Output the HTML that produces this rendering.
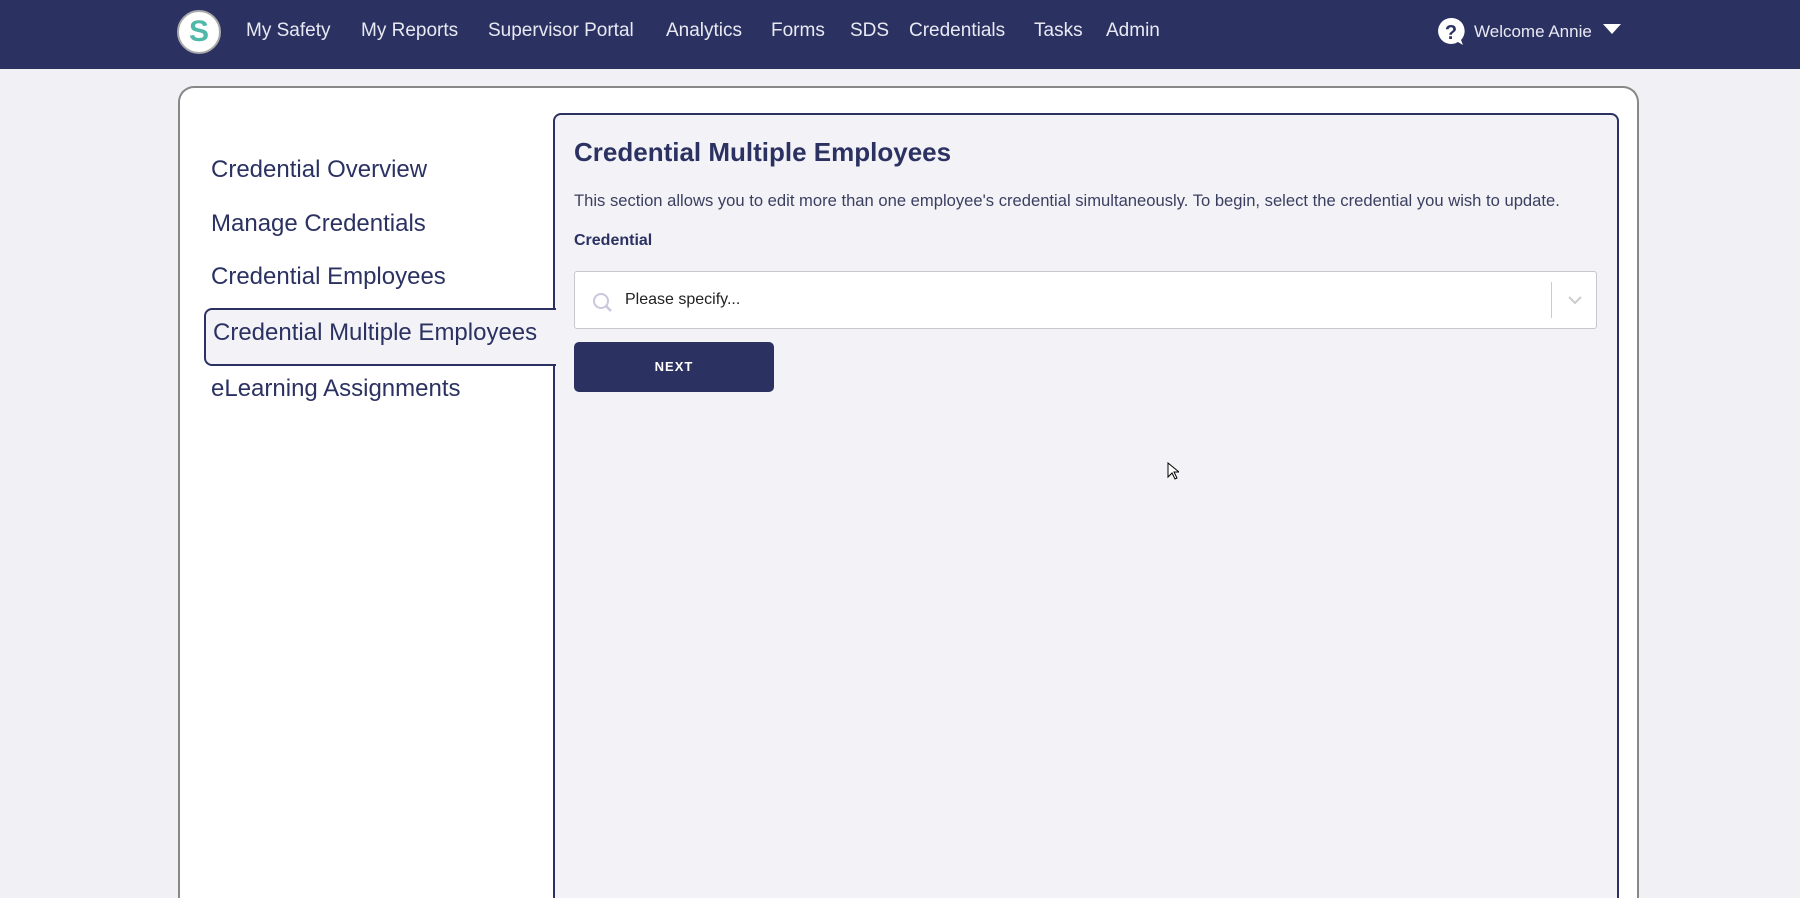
<!DOCTYPE html>
<html><head><meta charset="utf-8"><style>
*{box-sizing:border-box;margin:0;padding:0}
html,body{width:1800px;height:898px;overflow:hidden}
body{background:#f1f0f5;font-family:"Liberation Sans",sans-serif;position:relative;color:#2b3262}
.nav{position:absolute;left:0;top:0;width:1800px;height:69px;background:#2b3262}
.nav a{position:absolute;top:20px;color:#e8e9f2;font-size:19px;white-space:nowrap}
.logo{position:absolute;left:177px;top:10px;width:44px;height:44px;border-radius:50%;background:#fff;border:2px solid #aaa;color:#4fb8a8;font-weight:bold;font-size:30px;text-align:center;line-height:40px}
.card{position:absolute;left:178px;top:86px;width:1461px;height:812px;background:#fff;border:2px solid #888;border-bottom:none;border-radius:16px 16px 0 0}
.side{position:absolute;left:211px;font-size:24px;color:#2b3262;white-space:nowrap}
.active{position:absolute;left:204px;top:308px;width:352px;height:58px;border:2px solid #2b3262;border-right:none;border-radius:8px 0 0 8px;background:#f3f2f7}
.panel{position:absolute;left:553px;top:113px;width:1066px;height:785px;border:2px solid #2b3262;border-bottom:none;border-radius:8px 8px 0 0;background:#f3f2f7}
.sel{position:absolute;left:574px;top:271px;width:1023px;height:58px;background:#fff;border:1px solid #c8c8cc;border-radius:3px}
.btn{position:absolute;left:574px;top:342px;width:200px;height:50px;background:#2b3262;border-radius:5px;color:#fff;font-weight:bold;font-size:13px;letter-spacing:1px;text-align:center;line-height:50px}
</style></head><body>
<div class="nav">
<div class="logo">S</div>
<a style="left:246px">My Safety</a>
<a style="left:361px">My Reports</a>
<a style="left:488px">Supervisor Portal</a>
<a style="left:666px">Analytics</a>
<a style="left:771px">Forms</a>
<a style="left:850px">SDS</a>
<a style="left:909px">Credentials</a>
<a style="left:1034px">Tasks</a>
<a style="left:1106px">Admin</a>
<svg style="position:absolute;left:1435px;top:16px" width="32" height="32" viewBox="0 0 32 32"><path d="M16 2a13 13 0 1 0 7 24l5 3-2-5A13 13 0 0 0 16 2z" fill="#fff"/><text x="16" y="23" text-anchor="middle" font-family="Liberation Sans" font-weight="bold" font-size="20" fill="#2b3262">?</text></svg>
<a style="left:1474px;font-size:17px;top:22px">Welcome Annie</a>
<svg style="position:absolute;left:1603px;top:24px" width="18" height="11"><path d="M0 0h18L9 10z" fill="#fff"/></svg>
</div>
<div class="card"></div>
<div class="side" style="top:156px">Credential Overview</div>
<div class="side" style="top:210px">Manage Credentials</div>
<div class="side" style="top:263px">Credential Employees</div>
<div class="panel"></div>
<div class="active"></div>
<div class="side" style="top:319px;left:213px">Credential Multiple Employees</div>
<div class="side" style="top:375px">eLearning Assignments</div>
<div style="position:absolute;left:574px;top:137px;font-size:26px;font-weight:bold">Credential Multiple Employees</div>
<div style="position:absolute;left:574px;top:191px;font-size:16.6px;color:#3a3f60;white-space:nowrap">This section allows you to edit more than one employee's credential simultaneously. To begin, select the credential you wish to update.</div>
<div style="position:absolute;left:574px;top:232px;font-size:16px;font-weight:bold">Credential</div>
<div class="sel">
<svg style="position:absolute;left:17px;top:20px" width="22" height="22"><circle cx="9" cy="9" r="7" fill="none" stroke="#c9c7dc" stroke-width="2"/><path d="M14 14l5 5" stroke="#c9c7dc" stroke-width="2.5"/></svg>
<div style="position:absolute;left:50px;top:19px;font-size:16px;color:#222">Please specify...</div>
<div style="position:absolute;left:976px;top:10px;width:1px;height:36px;background:#ccc"></div>
<svg style="position:absolute;left:993px;top:23px" width="14" height="10"><path d="M1 2l6 6 6-6" fill="none" stroke="#ccc" stroke-width="2"/></svg>
</div>
<div class="btn">NEXT</div>
<svg style="position:absolute;left:1167px;top:462px" width="12" height="18"><path d="M1 1v14l4-4 3 6 2-1-3-6h5z" fill="#fff" stroke="#000"/></svg>
</body></html>
